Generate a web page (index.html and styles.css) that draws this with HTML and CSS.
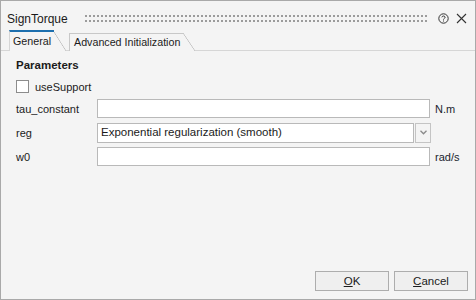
FILE: index.html
```html
<!DOCTYPE html>
<html>
<head>
<meta charset="utf-8">
<link rel="stylesheet" href="styles.css">
</head>
<body>
<div class="window">
  <div class="titlebar">
    <span class="title">SignTorque</span>
    <svg class="grip" height="7"><defs><pattern id="dots" width="4" height="5" patternUnits="userSpaceOnUse"><rect width="2" height="2" fill="#9c9c9c"/></pattern></defs><rect width="100%" height="100%" fill="url(#dots)"/></svg>
    <svg class="help" width="11" height="11" viewBox="0 0 11 11"><circle cx="5.5" cy="5.5" r="4.7" fill="none" stroke="#333" stroke-width="1"/><path d="M3.9 4.3 C3.9 2.6 7.1 2.6 7.1 4.3 C7.1 5.4 5.5 5.4 5.5 6.6" fill="none" stroke="#333" stroke-width="1"/><rect x="5" y="7.5" width="1" height="1" fill="#333"/></svg>
    <svg class="close" width="11" height="11" viewBox="0 0 11 11"><path d="M1 1 L10 10 M10 1 L1 10" stroke="#333" stroke-width="1.1"/></svg>
  </div>
  <div class="tabstrip">
    <div class="tab active">General</div>
    <div class="tab">Advanced Initialization</div>
  </div>
  <div class="panel">
    <div class="section">Parameters</div>
    <label class="check"><span class="box"></span>useSupport</label>
    <div class="grid">
      <span class="lbl">tau_constant</span>
      <span class="field"></span>
      <span class="unit">N.m</span>
      <span class="lbl">reg</span>
      <span class="combo"><span class="combo-text">Exponential regularization (smooth)</span><span class="drop"><svg width="7" height="5" viewBox="0 0 7 5"><path d="M0.5 0.8 L3.5 3.8 L6.5 0.8" fill="none" stroke="#8a8a8a" stroke-width="1.3"/></svg></span></span>
      <span class="unit"></span>
      <span class="lbl">w0</span>
      <span class="field"></span>
      <span class="unit">rad/s</span>
    </div>
  </div>
  <div class="footer">
    <button class="btn"><u>O</u>K</button>
    <button class="btn"><u>C</u>ancel</button>
  </div>
</div>
</body>
</html>
```
FILE: styles.css
```css
html, body {
  margin: 0;
  padding: 0;
  background: #ffffff;
}
body {
  font-family: "Liberation Sans", Arial, sans-serif;
  font-size: 11px;
  color: #1b1b1b;
}
.window {
  width: 476px;
  height: 300px;
  box-sizing: border-box;
  border: 1px solid #a9a9a9;
  background: #f4f4f4;
  display: flex;
  flex-direction: column;
}
.titlebar {
  height: 29px;
  box-sizing: border-box;
  display: flex;
  align-items: center;
  padding: 6px 8px 0 6px;
}
.title {
  font-size: 12px;
  color: #1a1a1a;
}
.grip {
  flex: 1;
  min-width: 0;
  margin: 0 9px 0 17px;
}
.help {
  margin-right: 7px;
}
.tabstrip {
  height: 21px;
  box-sizing: border-box;
  display: flex;
  align-items: flex-end;
  padding-left: 8px;
  background: linear-gradient(#d6d6d6, #d6d6d6) no-repeat 0 100% / 100% 1px;
}
.tab {
  position: relative;
  box-sizing: border-box;
  height: 18px;
  border-top: 1px solid #c8c8c8;
  border-left: 1px solid #c8c8c8;
  padding: 2px 3px 0 4px;
  margin-right: 15px;
  color: #1b1b1b;
  background: #f4f4f4;
  font-size: 10.7px;
  white-space: nowrap;
}
.tab::after {
  content: "";
  position: absolute;
  top: -1px;
  right: -12px;
  width: 12px;
  bottom: 0;
  background: linear-gradient(to top right, #f4f4f4 calc(50% - 0.6px), #bdbdbd 50%, transparent calc(50% + 0.7px));
}
.tab.active {
  height: 21px;
  border-top: 2px solid #1d6fae;
  border-left-color: #d6d6d6;
  padding: 3px 3px 0 3px;
  z-index: 1;
}
.tab.active::after {
  top: 0;
}
.panel {
  flex: 1;
  padding: 7px 0 0 15px;
}
.section {
  font-weight: bold;
  font-size: 11.5px;
  line-height: 14px;
}
.check {
  display: flex;
  align-items: center;
  height: 15px;
  margin-top: 7px;
  color: #1b1b1b;
}
.box {
  width: 11px;
  height: 11px;
  border: 1px solid #8c8c8c;
  background: #ffffff;
  margin-right: 6px;
}
.grid {
  display: grid;
  grid-template-columns: 81px 333px auto;
  grid-auto-rows: 19px;
  row-gap: 5px;
  align-items: center;
  margin-top: 5px;
}
.lbl {
  padding-top: 1px;
}
.field {
  height: 19px;
  box-sizing: border-box;
  border: 1px solid #b9b9b9;
  background: #ffffff;
}
.combo {
  display: flex;
  align-items: stretch;
  width: 334px;
  height: 20px;
}
.combo-text {
  flex: 1;
  border: 1px solid #b9b9b9;
  background: #ffffff;
  padding-left: 3px;
  line-height: 17px;
  font-size: 11.5px;
}
.drop {
  width: 14px;
  margin-left: 1px;
  border: 1px solid #c4c4c4;
  background: #f4f4f4;
  display: flex;
  align-items: center;
  justify-content: center;
}
.unit {
  padding-left: 5px;
  color: #1b1f2e;
}
.footer {
  display: flex;
  justify-content: flex-end;
  gap: 5px;
  padding: 0 7px 8px 0;
}
.btn {
  width: 74px;
  height: 20px;
  box-sizing: border-box;
  border: 1px solid #adadad;
  background: #efefef;
  font-family: "Liberation Sans", Arial, sans-serif;
  font-size: 11.5px;
  color: #1b1b1b;
  padding: 0;
}
```
